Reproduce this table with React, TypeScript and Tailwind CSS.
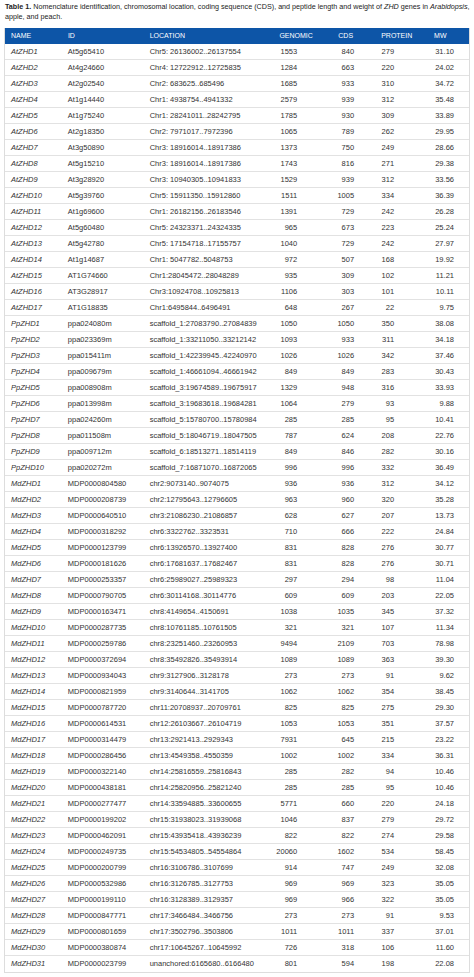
import React from 'react';

// name, id, location, genomic, cds, protein, mw
const rows: string[][] = [
  ['AtZHD1', 'At5g65410', 'Chr5: 26136002..26137554', '1553', '840', '279', '31.10'],
  ['AtZHD2', 'At4g24660', 'Chr4: 12722912..12725835', '1284', '663', '220', '24.02'],
  ['AtZHD3', 'At2g02540', 'Chr2: 683625..685496', '1685', '933', '310', '34.72'],
  ['AtZHD4', 'At1g14440', 'Chr1: 4938754..4941332', '2579', '939', '312', '35.48'],
  ['AtZHD5', 'At1g75240', 'Chr1: 28241011..28242795', '1785', '930', '309', '33.89'],
  ['AtZHD6', 'At2g18350', 'Chr2: 7971017..7972396', '1065', '789', '262', '29.95'],
  ['AtZHD7', 'At3g50890', 'Chr3: 18916014..18917386', '1373', '750', '249', '28.66'],
  ['AtZHD8', 'At5g15210', 'Chr3: 18916014..18917386', '1743', '816', '271', '29.38'],
  ['AtZHD9', 'At3g28920', 'Chr3: 10940305..10941833', '1529', '939', '312', '33.56'],
  ['AtZHD10', 'At5g39760', 'Chr5: 15911350..15912860', '1511', '1005', '334', '36.39'],
  ['AtZHD11', 'At1g69600', 'Chr1: 26182156..26183546', '1391', '729', '242', '26.28'],
  ['AtZHD12', 'At5g60480', 'Chr5: 24323371..24324335', '965', '673', '223', '25.24'],
  ['AtZHD13', 'At5g42780', 'Chr5: 17154718..17155757', '1040', '729', '242', '27.97'],
  ['AtZHD14', 'At1g14687', 'Chr1: 5047782..5048753', '972', '507', '168', '19.92'],
  ['AtZHD15', 'AT1G74660', 'Chr1:28045472..28048289', '935', '309', '102', '11.21'],
  ['AtZHD16', 'AT3G28917', 'Chr3:10924708..10925813', '1106', '303', '101', '10.11'],
  ['AtZHD17', 'AT1G18835', 'Chr1:6495844..6496491', '648', '267', '22', '9.75'],
  ['PpZHD1', 'ppa024080m', 'scaffold_1:27083790..27084839', '1050', '1050', '350', '38.08'],
  ['PpZHD2', 'ppa023369m', 'scaffold_1:33211050..33212142', '1093', '933', '311', '34.18'],
  ['PpZHD3', 'ppa015411m', 'scaffold_1:42239945..42240970', '1026', '1026', '342', '37.46'],
  ['PpZHD4', 'ppa009679m', 'scaffold_1:46661094..46661942', '849', '849', '283', '30.43'],
  ['PpZHD5', 'ppa008908m', 'scaffold_3:19674589..19675917', '1329', '948', '316', '33.93'],
  ['PpZHD6', 'ppa013998m', 'scaffold_3:19683618..19684281', '1064', '279', '93', '9.88'],
  ['PpZHD7', 'ppa024260m', 'scaffold_5:15780700..15780984', '285', '285', '95', '10.41'],
  ['PpZHD8', 'ppa011508m', 'scaffold_5:18046719..18047505', '787', '624', '208', '22.76'],
  ['PpZHD9', 'ppa009712m', 'scaffold_6:18513271..18514119', '849', '846', '282', '30.16'],
  ['PpZHD10', 'ppa020272m', 'scaffold_7:16871070..16872065', '996', '996', '332', '36.49'],
  ['MdZHD1', 'MDP0000804580', 'chr2:9073140..9074075', '936', '936', '312', '34.12'],
  ['MdZHD2', 'MDP0000208739', 'chr2:12795643..12796605', '963', '960', '320', '35.28'],
  ['MdZHD3', 'MDP0000640510', 'chr3:21086230..21086857', '628', '627', '207', '13.73'],
  ['MdZHD4', 'MDP0000318292', 'chr6:3322762..3323531', '710', '666', '222', '24.84'],
  ['MdZHD5', 'MDP0000123799', 'chr6:13926570..13927400', '831', '828', '276', '30.77'],
  ['MdZHD6', 'MDP0000181626', 'chr6:17681637..17682467', '831', '828', '276', '30.71'],
  ['MdZHD7', 'MDP0000253357', 'chr6:25989027..25989323', '297', '294', '98', '11.04'],
  ['MdZHD8', 'MDP0000790705', 'chr6:30114168..30114776', '609', '609', '203', '22.05'],
  ['MdZHD9', 'MDP0000163471', 'chr8:4149654..4150691', '1038', '1035', '345', '37.32'],
  ['MdZHD10', 'MDP0000287735', 'chr8:10761185..10761505', '321', '321', '107', '11.34'],
  ['MdZHD11', 'MDP0000259786', 'chr8:23251460..23260953', '9494', '2109', '703', '78.98'],
  ['MdZHD12', 'MDP0000372694', 'chr8:35492826..35493914', '1089', '1089', '363', '39.30'],
  ['MdZHD13', 'MDP0000934043', 'chr9:3127906..3128178', '273', '273', '91', '9.62'],
  ['MdZHD14', 'MDP0000821959', 'chr9:3140644..3141705', '1062', '1062', '354', '38.45'],
  ['MdZHD15', 'MDP0000787720', 'chr11:20708937..20709761', '825', '825', '275', '29.30'],
  ['MdZHD16', 'MDP0000614531', 'chr12:26103667..26104719', '1053', '1053', '351', '37.57'],
  ['MdZHD17', 'MDP0000314479', 'chr13:2921413..2929343', '7931', '645', '215', '23.22'],
  ['MdZHD18', 'MDP0000286456', 'chr13:4549358..4550359', '1002', '1002', '334', '36.31'],
  ['MdZHD19', 'MDP0000322140', 'chr14:25816559..25816843', '285', '282', '94', '10.46'],
  ['MdZHD20', 'MDP0000438181', 'chr14:25820956..25821240', '285', '285', '95', '10.46'],
  ['MdZHD21', 'MDP0000277477', 'chr14:33594885..33600655', '5771', '660', '220', '24.18'],
  ['MdZHD22', 'MDP0000199202', 'chr15:31938023..31939068', '1046', '837', '279', '29.72'],
  ['MdZHD23', 'MDP0000462091', 'chr15:43935418..43936239', '822', '822', '274', '29.58'],
  ['MdZHD24', 'MDP0000249735', 'chr15:54534805..54554864', '20060', '1602', '534', '58.45'],
  ['MdZHD25', 'MDP0000200799', 'chr16:3106786..3107699', '914', '747', '249', '32.08'],
  ['MdZHD26', 'MDP0000532986', 'chr16:3126785..3127753', '969', '969', '323', '35.05'],
  ['MdZHD27', 'MDP0000199110', 'chr16:3128389..3129357', '969', '966', '322', '35.05'],
  ['MdZHD28', 'MDP0000847771', 'chr17:3466484..3466756', '273', '273', '91', '9.53'],
  ['MdZHD29', 'MDP0000801659', 'chr17:3502796..3503806', '1011', '1011', '337', '37.01'],
  ['MdZHD30', 'MDP0000380874', 'chr17:10645267..10645992', '726', '318', '106', '11.60'],
  ['MdZHD31', 'MDP0000023799', 'unanchored:6165680..6166480', '801', '594', '198', '22.08'],
];

const App = () => {
  return (
    <div className="bg-white w-[474px] min-h-[977px] font-['Liberation_Sans',Arial,sans-serif] text-[#333]">
      <div className="px-[5px] pt-[2px] text-[7.2px] leading-[10px] text-[#222]">
        <p className="whitespace-nowrap">
          <b>Table 1.</b> Nomenclature identification, chromosomal location, coding sequence (CDS), and peptide length and weight of <i>ZHD</i> genes in <i>Arabidopsis</i>,
        </p>
        <p>apple, and peach.</p>
      </div>

      <div className="mx-[4px] mt-[6px] border-x border-b border-[#dddddd]">
        <div className="flex h-[16px] items-center bg-[#0d55a7] text-white text-[7px] uppercase">
          <div className="w-[57px] pl-[6px]">Name</div>
          <div className="w-[82px] pl-[6px]">ID</div>
          <div className="w-[129px] pl-[6px]">Location</div>
          <div className="w-[60px] pl-[7px]">Genomic</div>
          <div className="w-[43px] pl-[6px]">CDS</div>
          <div className="w-[53px] pl-[6px]">Protein</div>
          <div className="w-[41px] pl-[6px]">MW</div>
        </div>

        {rows.map((r, i) => (
          <div
            key={r[0]}
            className={`flex h-[16px] items-center text-[7.5px] ${i < rows.length - 1 ? 'border-b border-[#e2e2e2]' : ''}`}
          >
            <div className="w-[57px] pl-[6px] italic">{r[0]}</div>
            <div className="w-[82px] pl-[6px]">{r[1]}</div>
            <div className="w-[129px] pl-[6px]">{r[2]}</div>
            <div className="w-[60px] pr-[35px] text-right">{r[3]}</div>
            <div className="w-[43px] pr-[21px] text-right">{r[4]}</div>
            <div className="w-[53px] pr-[34px] text-right">{r[5]}</div>
            <div className="w-[41px] pr-[15px] text-right">{r[6]}</div>
          </div>
        ))}
      </div>
    </div>
  );
};

export default App;
